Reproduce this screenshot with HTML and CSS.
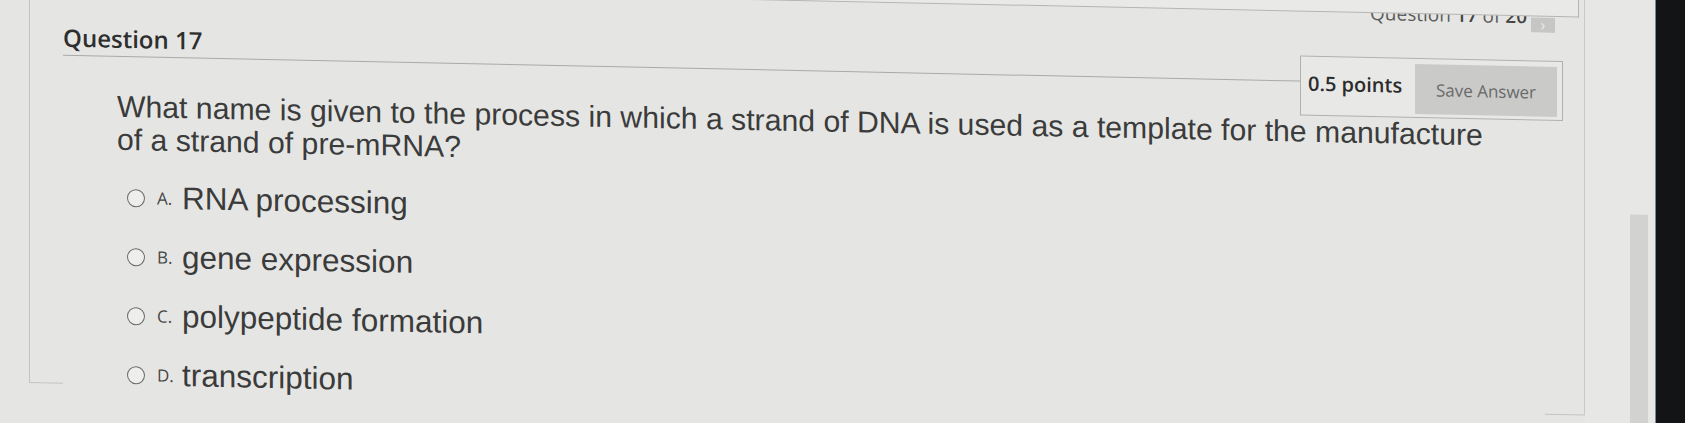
FILE: index.html
```html
<!DOCTYPE html>
<html lang="en">
<head>
    <meta charset="UTF-8">
    <title>Question 17</title>
    <link rel="stylesheet" href="styles.css">
</head>
<body>

<div class="screen">
    <div class="display">
        <div class="canvas">
            <div class="frame">
                <div class="topbar"></div>

                <!-- navegação entre questões -->
                <div class="pager">
                    <span class="pager-text">Question <b>17</b> of <b>20</b></span>
                    <span class="pager-next">›</span>
                </div>

                <div class="q-head">
                    <h1 class="q-title">Question 17</h1>
                    <div class="points-box">
                        <span class="points">0.5 points</span>
                        <button class="save-btn">Save Answer</button>
                    </div>
                </div>

                <p class="question">What name is given to the process in which a strand of DNA is used as a template for the manufacture of a strand of pre-mRNA?</p>

                <ul class="options">
                    <li class="option"><span class="radio"></span><span class="letter">A.</span><span class="answer">RNA processing</span></li>
                    <li class="option"><span class="radio"></span><span class="letter">B.</span><span class="answer">gene expression</span></li>
                    <li class="option"><span class="radio"></span><span class="letter">C.</span><span class="answer">polypeptide formation</span></li>
                    <li class="option"><span class="radio"></span><span class="letter">D.</span><span class="answer">transcription</span></li>
                </ul>
            </div>
            <div class="gutter"><div class="thumb"></div></div>
        </div>
    </div>
    <div class="bezel"></div>
</div>

</body>
</html>
```
FILE: styles.css
```css
body {
    margin: 0;
    background-color: #e5e6e4;
    font-family: 'Open Sans', 'Liberation Sans', sans-serif;
    color: #333;
    overflow: hidden;
}
.screen {
    display: flex;
    height: 423px;
}
.display {
    width: 1655px;
    height: 423px;
    overflow: hidden;
    background-color: #e5e6e4;
}
/* the photo is taken at a slight angle */
.canvas {
    display: flex;
    box-sizing: border-box;
    width: 1655px;
    height: 470px;
    padding-left: 29px;
    transform: skewY(1.2deg);
    transform-origin: 100% 0;
}
.frame {
    position: relative;
    box-sizing: border-box;
    width: 1556px;
    height: 416px;
    border-left: 1px solid #c3c4c2;
    border-right: 1px solid #c9cac8;
}
.frame::before,
.frame::after {
    content: "";
    position: absolute;
    bottom: -1px;
    border-top: 1px solid #c3c4c2;
}
.frame::before {
    left: -1px;
    width: 34px;
}
.frame::after {
    right: -1px;
    width: 40px;
}
.topbar {
    height: 18px;
    margin-right: 5px;
    background-color: #e9eae8;
    border-bottom: 1px solid #b4b5b3;
    border-right: 1px solid #b4b5b3;
}
.pager {
    display: flex;
    justify-content: flex-end;
    align-items: flex-end;
    height: 16px;
    padding-right: 29px;
    overflow: hidden;
}
.pager-text {
    font-size: 19px;
    line-height: 19px;
    margin-bottom: 6px;
    color: #5a5a5a;
}
.pager-text b {
    font-weight: 600;
    color: #444;
}
.pager-next {
    width: 24px;
    height: 15px;
    margin-left: 4px;
    background-color: #c6c7c5;
    color: #e9e9e9;
    font-size: 16px;
    line-height: 15px;
    text-align: center;
}
.q-head {
    display: flex;
    align-items: flex-start;
    margin: 24px 21px 0 0;
}
.q-title {
    flex: 1;
    margin: 0 0 0 33px;
    padding-bottom: 5px;
    font-size: 24px;
    line-height: 24px;
    font-weight: 600;
    color: #2e2e2e;
    border-bottom: 1px solid #a9aaa8;
}
.points-box {
    display: flex;
    align-items: flex-start;
    box-sizing: border-box;
    width: 263px;
    height: 60px;
    margin-top: 4px;
    padding: 5px 5px 0 7px;
    background-color: #e8e9e7;
    border: 1px solid #b0b1af;
}
.points {
    margin-top: 8px;
    font-size: 20px;
    line-height: 27px;
    font-weight: 600;
    color: #2c2c2c;
}
.save-btn {
    margin-left: auto;
    width: 142px;
    height: 50px;
    padding: 0;
    border: none;
    background-color: #cacbc9;
    color: #696969;
    font-family: 'Open Sans', sans-serif;
    font-size: 17px;
}
.question {
    width: 1380px;
    margin: -1px 0 0 87px;
    font-family: 'Liberation Sans', Arial, sans-serif;
    font-size: 30.2px;
    line-height: 33px;
    color: #3b3b3b;
}
.options {
    list-style: none;
    margin: 12px 0 0 97px;
    padding: 0;
}
.option {
    display: flex;
    align-items: center;
    height: 59px;
}
.radio {
    box-sizing: border-box;
    width: 18px;
    height: 18px;
    margin-right: 12px;
    border: 1.5px solid #6a6a6a;
    border-radius: 50%;
    background-color: #eeeeec;
}
.letter {
    width: 25px;
    font-size: 17px;
    color: #454545;
}
.answer {
    font-family: 'Liberation Sans', Arial, sans-serif;
    font-size: 31.5px;
    line-height: 59px;
    color: #3b3b3b;
}
.gutter {
    flex: 1;
    background-color: #e7e8e6;
}
.thumb {
    width: 18px;
    height: 260px;
    margin: 215px 0 0 45px;
    background-color: #d2d3d1;
}
.bezel {
    flex: 1;
    background-color: #131416;
    border-left: 1px solid #7a8794;
}
```
